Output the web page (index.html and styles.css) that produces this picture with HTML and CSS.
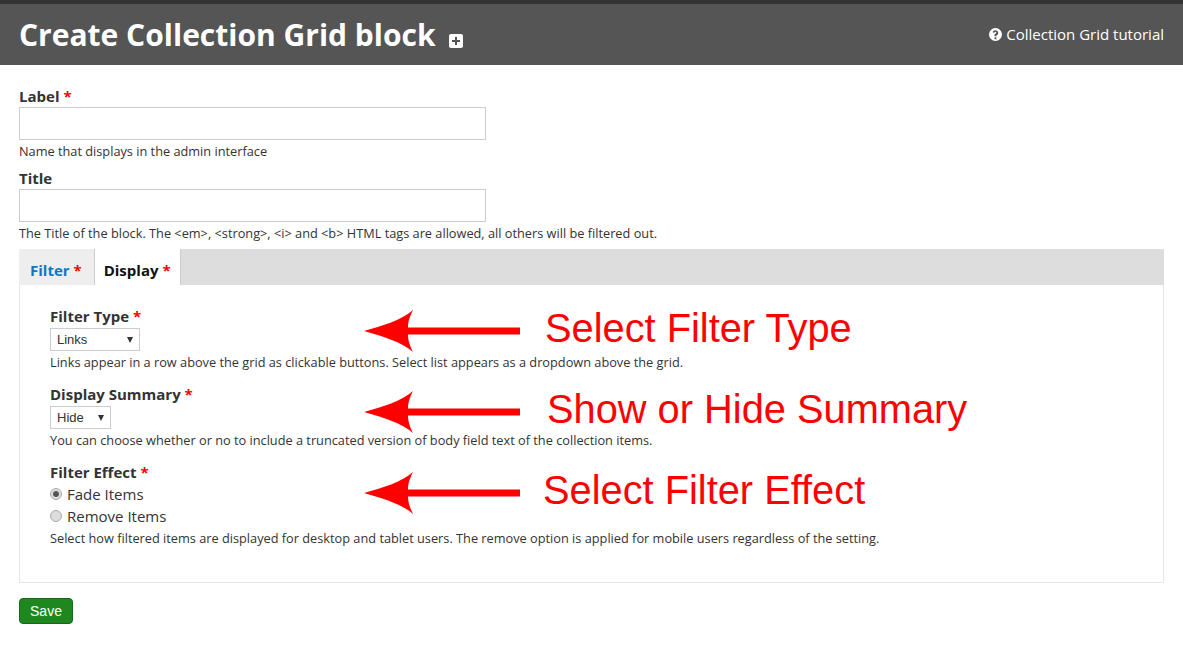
FILE: index.html
```html
<!DOCTYPE html>
<html lang="en">
<head>
  <meta charset="UTF-8" />
  <title>Create Collection Grid block</title>
  <link rel="stylesheet" href="styles.css">
</head>
<body>
  <!-- Page header -->
  <div class="page-header">
    <h1>Create Collection Grid block
      <svg class="add-icon" viewBox="0 0 14 14"><path fill-rule="evenodd" d="M2 0h10a2 2 0 0 1 2 2v10a2 2 0 0 1-2 2H2a2 2 0 0 1-2-2V2a2 2 0 0 1 2-2zM6 3v3H3v2h3v3h2V8h3V6H8V3z"/></svg>
    </h1>
    <a class="tutorial-link" href="#">
      <svg class="help-icon" viewBox="0 0 14 14"><path fill-rule="evenodd" d="M7 0a7 7 0 1 1 0 14A7 7 0 0 1 7 0zM6 10v2h2v-2zM7 2.4c-1.7 0-2.8.9-3 2.4l1.8.4c.1-.7.5-1.1 1.1-1.1.6 0 1 .3 1 .8 0 .5-.3.8-.9 1.2-.8.5-1.1 1-1.1 1.9V9h2v-.3c0-.5.2-.7.8-1.1.8-.5 1.3-1.2 1.3-2.2 0-1.8-1.3-3-3-3z"/></svg>
      Collection Grid tutorial
    </a>
  </div>

  <form class="block-form">
    <div class="field">
      <label>Label <span class="req">*</span></label>
      <input type="text" class="text-input" />
      <p class="help">Name that displays in the admin interface</p>
    </div>
    <div class="field">
      <label>Title</label>
      <input type="text" class="text-input" />
      <p class="help">The Title of the block. The &lt;em&gt;, &lt;strong&gt;, &lt;i&gt; and &lt;b&gt; HTML tags are allowed, all others will be filtered out.</p>
    </div>

    <!-- Tabs -->
    <div class="tabs">
      <a class="tab" href="#">Filter <span class="req">*</span></a>
      <a class="tab active" href="#">Display <span class="req">*</span></a>
    </div>
    <div class="tab-panel">
      <div class="panel-field">
        <label>Filter Type <span class="req">*</span></label>
        <span class="fake-select links-select">Links<i class="caret"></i></span>
        <p class="help">Links appear in a row above the grid as clickable buttons. Select list appears as a dropdown above the grid.</p>
      </div>
      <div class="panel-field">
        <label>Display Summary <span class="req">*</span></label>
        <span class="fake-select hide-select">Hide<i class="caret"></i></span>
        <p class="help">You can choose whether or no to include a truncated version of body field text of the collection items.</p>
      </div>
      <div class="panel-field">
        <label>Filter Effect <span class="req">*</span></label>
        <div class="radio-row"><span class="radio checked"></span>Fade Items</div>
        <div class="radio-row"><span class="radio"></span>Remove Items</div>
        <p class="help">Select how filtered items are displayed for desktop and tablet users. The remove option is applied for mobile users regardless of the setting.</p>
      </div>
    </div>

    <button type="button" class="save-btn">Save</button>
  </form>

  <!-- Red annotations drawn over the page -->
  <svg class="arrow arrow-1" viewBox="0 0 156 42"><path d="M0 21C18 16 38 10 49 0C45 8 44 13 44 17.500H156V24.500H44C44 29 45 34 49 42C38 32 18 26 0 21z"/></svg>
  <span class="note note-1">Select Filter Type</span>
  <svg class="arrow arrow-2" viewBox="0 0 156 42"><path d="M0 21C18 16 38 10 49 0C45 8 44 13 44 17.500H156V24.500H44C44 29 45 34 49 42C38 32 18 26 0 21z"/></svg>
  <span class="note note-2">Show or Hide Summary</span>
  <svg class="arrow arrow-3" viewBox="0 0 156 42"><path d="M0 21C18 16 38 10 49 0C45 8 44 13 44 17.500H156V24.500H44C44 29 45 34 49 42C38 32 18 26 0 21z"/></svg>
  <span class="note note-3">Select Filter Effect</span>
</body>
</html>
```

FILE: styles.css
```css
body {
  margin: 0;
  font-family: "Open Sans", sans-serif;
  color: #333;
  background: #fff;
}

/* Page header */
.page-header {
  display: flex;
  justify-content: space-between;
  align-items: center;
  height: 61px;
  padding: 0 19px;
  background: #555;
  border-top: 4px solid #333;
}
.page-header h1 {
  margin: 0;
  font-size: 30px;
  font-weight: 700;
  color: #fff;
}
.add-icon {
  width: 14px;
  height: 14px;
  margin-left: 6px;
  vertical-align: -2px;
  fill: #fff;
}
.tutorial-link {
  margin-bottom: 2px;
  color: #fff;
  font-size: 15px;
  text-decoration: none;
}
.help-icon {
  width: 13px;
  height: 13px;
  vertical-align: -1px;
  fill: #fff;
}

/* Form */
.block-form {
  padding: 20px 19px 0;
}
label {
  display: block;
  font-size: 15px;
  font-weight: 700;
  line-height: 22px;
}
.req {
  color: #f00;
}
.field {
  margin-bottom: 7px;
}
.text-input {
  display: block;
  width: 467px;
  height: 33px;
  box-sizing: border-box;
  border: 1px solid #ccc;
  background: #fff;
}
.help {
  margin: 3px 0 0;
  font-size: 12.75px;
  line-height: 17px;
}

/* Tabs */
.tabs {
  display: flex;
  height: 36px;
  margin-top: 7px;
  background: #ddd;
}
.tab {
  display: block;
  box-sizing: border-box;
  padding: 6px 12px 0 11px;
  font-size: 15px;
  font-weight: 700;
  line-height: 30px;
  color: #0d77c5;
  background: #eee;
  text-decoration: none;
}
.tab.active {
  color: #111;
  background: #fff;
  border-left: 1px solid #ccc;
  border-right: 1px solid #ccc;
  padding: 6px 9px 0;
}
.tab-panel {
  height: 276px;
  padding: 21px 30px 0;
  border: 1px solid #e5e5e5;
  border-top: 0;
}
.panel-field {
  margin-bottom: 13px;
}
.panel-field label {
  line-height: 20px;
  margin-bottom: 2px;
}
.fake-select {
  display: flex;
  align-items: center;
  justify-content: space-between;
  box-sizing: border-box;
  height: 23px;
  padding: 0 6px;
  border: 1px solid #ccc;
  font-family: "Liberation Sans", sans-serif;
  font-size: 13px;
}
.links-select {
  width: 90px;
}
.hide-select {
  width: 61px;
}
.caret {
  width: 0;
  height: 0;
  border-left: 3px solid transparent;
  border-right: 3px solid transparent;
  border-top: 6px solid #333;
}
.radio-row {
  display: flex;
  align-items: center;
  height: 22px;
  font-size: 15px;
}
.radio-row:first-of-type {
  margin-top: -1px;
}
.radio {
  width: 10px;
  height: 10px;
  margin-right: 5px;
  border: 1px solid #aaa;
  border-radius: 50%;
  background: #ddd;
}
.radio.checked {
  background: radial-gradient(circle, #555 0 2.5px, #ddd 3.5px);
}

.save-btn {
  display: block;
  width: 54px;
  height: 26px;
  margin-top: 15px;
  padding: 0;
  border: 1px solid #17691a;
  border-radius: 4px;
  background: #1e881e;
  color: #fff;
  font-family: "Liberation Sans", sans-serif;
  font-size: 14px;
}

/* Annotations */
.arrow {
  position: absolute;
  left: 364px;
  width: 156px;
  height: 42px;
  fill: #f00;
}
.arrow-1 { top: 310px; }
.arrow-2 { top: 391px; }
.arrow-3 { top: 472px; }
.note {
  position: absolute;
  font-family: "Liberation Sans", sans-serif;
  font-size: 39.8px;
  line-height: 44px;
  color: #f00;
  white-space: nowrap;
}
.note-1 { left: 545px; top: 306px; }
.note-2 { left: 547px; top: 387px; }
.note-3 { left: 543px; top: 468px; }
```
